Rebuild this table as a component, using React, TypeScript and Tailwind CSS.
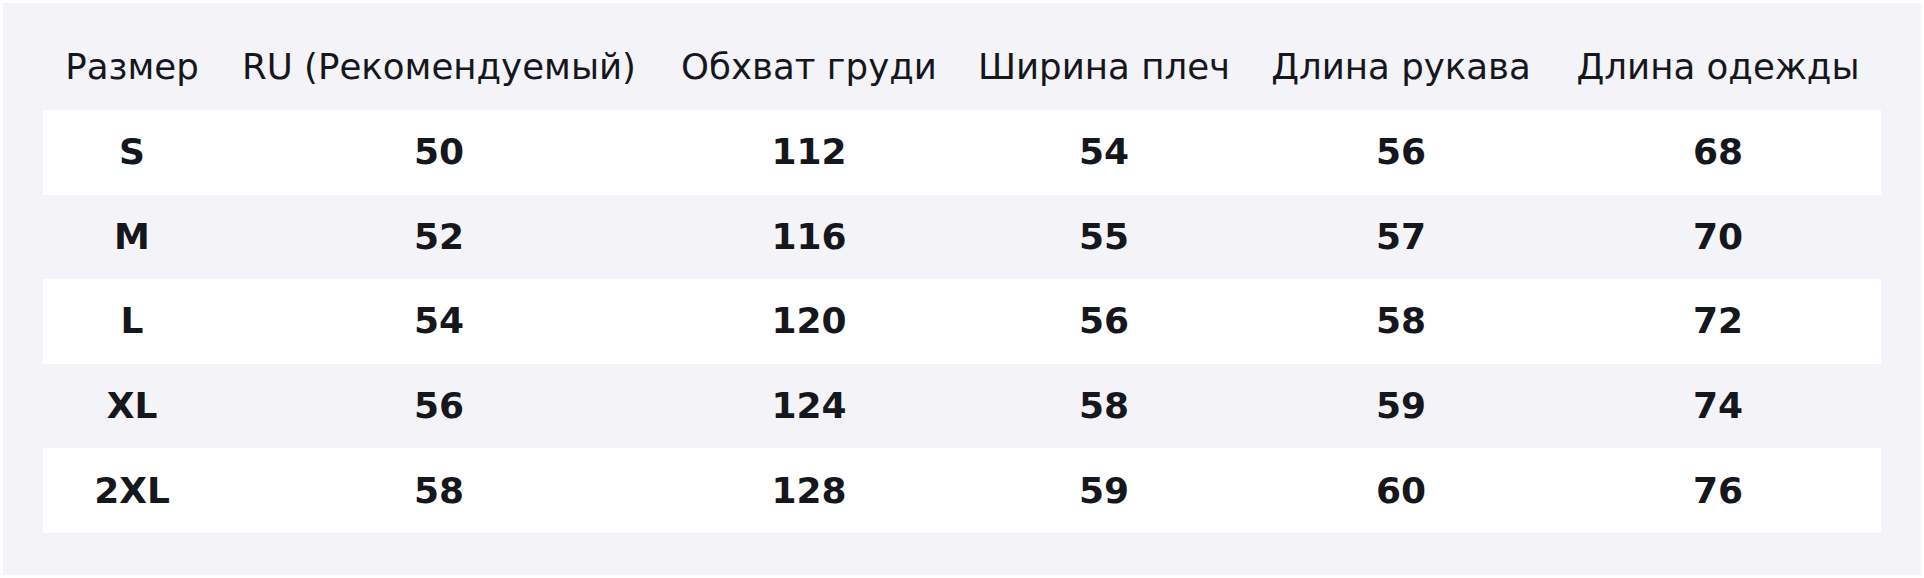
import React from "react";

const headers = [
  "Размер",
  "RU (Рекомендуемый)",
  "Обхват груди",
  "Ширина плеч",
  "Длина рукава",
  "Длина одежды",
];

const rows = [
  ["S", "50", "112", "54", "56", "68"],
  ["M", "52", "116", "55", "57", "70"],
  ["L", "54", "120", "56", "58", "72"],
  ["XL", "56", "124", "58", "59", "74"],
  ["2XL", "58", "128", "59", "60", "76"],
];

export default function App() {
  return (
    <div className="w-[1924px] h-[578px] bg-white p-[3px]" style={{ fontFamily: '"DejaVu Sans", sans-serif' }}>
      <div className="h-[572px] bg-[#f3f3f8] px-[40px] pt-[21px]">
        <div className="grid grid-cols-[178px_436px_304px_286px_308px_326px] text-[#16161d]">
          {headers.map((h) => (
            <div key={h} className="h-[86px] flex items-center justify-center text-[35.6px] whitespace-nowrap">
              {h}
            </div>
          ))}
        </div>
        {rows.map((r, i) => (
          <div
            key={r[0]}
            className={`grid grid-cols-[178px_436px_304px_286px_308px_326px] h-[84.6px] text-[#16161d] ${i % 2 === 0 ? "bg-white" : "bg-[#f3f3f8]"}`}
          >
            {r.map((c, j) => (
              <div key={j} className="flex items-center justify-center text-[36px] font-bold">
                {c}
              </div>
            ))}
          </div>
        ))}
      </div>
    </div>
  );
}
